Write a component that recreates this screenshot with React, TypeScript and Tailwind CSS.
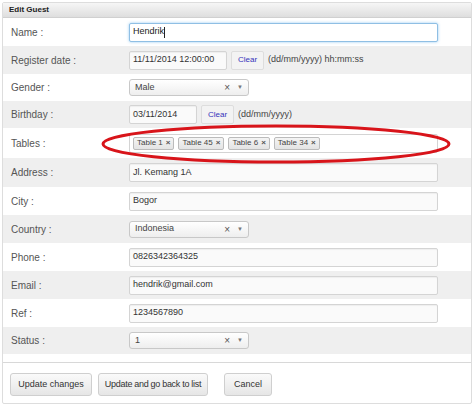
import React from 'react';

const fuente = { fontFamily: '"Liberation Sans", Arial, sans-serif' };

function Fila({ label, gris, alto = 'h-[28px]', children }: { label: string; gris?: boolean; alto?: string; children: React.ReactNode }) {
  return (
    <div className={`flex items-center ${alto} ${gris ? 'bg-[#efefef]' : 'bg-white'}`}>
      <div className="w-[126px] shrink-0 pl-[8px] text-[10px] text-[#555]">{label}</div>
      <div className="flex items-center gap-[4px] min-w-0">{children}</div>
    </div>
  );
}

function Input({ value, w = 'w-[309px]' }: { value: string; w?: string }) {
  return (
    <div className={`${w} h-[19px] border border-[#d4d4d4] bg-[#fafafa] rounded-[2px] px-[3px] flex items-center text-[9px] text-[#333] shadow-[inset_0_1px_1px_rgba(0,0,0,0.05)]`}>
      {value}
    </div>
  );
}

function Select({ value }: { value: string }) {
  return (
    <div className="w-[120px] h-[17px] border border-[#c8c8c8] rounded-[3px] bg-gradient-to-b from-white to-[#eee] flex items-center px-[5px] text-[9px] text-[#444]">
      <span className="flex-1">{value}</span>
      <span className="text-[10px] text-[#555] mr-[7px]">×</span>
      <span className="text-[6px] text-[#777]">▼</span>
    </div>
  );
}

function Clear() {
  return (
    <div className="h-[19px] w-[33px] justify-center border border-[#ddd] rounded-[2px] bg-[#f3f3f3] flex items-center text-[8px] text-[#3333bb]">
      Clear
    </div>
  );
}

function Tag({ t }: { t: string }) {
  return (
    <span className="h-[13px] px-[3px] border border-[#bbb] rounded-[2px] bg-gradient-to-b from-[#f4f4f4] to-[#e4e4e4] flex items-center gap-[3px] text-[8px] text-[#444]">
      {t}
      <span className="text-[8px] text-[#555] font-bold">×</span>
    </span>
  );
}

function Boton({ t, w, extra = '' }: { t: string; w: string; extra?: string }) {
  return (
    <div className={`${w} ${extra} h-[23px] justify-center whitespace-nowrap border border-[#cfcfcf] rounded-[3px] bg-gradient-to-b from-[#fafafa] to-[#e6e6e6] flex items-center text-[9px] text-[#333]`}>
      {t}
    </div>
  );
}

export default function App() {
  return (
    <div style={fuente} className="w-[474px] h-[413px] bg-white pt-[2px] px-[2px]">
      <div className="relative border border-[#ddd] rounded-[2px] h-[402px] flex flex-col">
        <div className="h-[15px] bg-gradient-to-b from-[#f6f6f6] to-[#dedede] border-b border-[#d0d0d0] flex items-center pl-[6px] text-[8px] font-bold text-[#222]">
          Edit Guest
        </div>
        <Fila label="Name :">
          <div className="w-[309px] h-[19px] border border-[#8fbfe4] bg-white rounded-[2px] px-[3px] flex items-center text-[9px] text-[#222] shadow-[0_0_3px_rgba(82,168,236,0.6)]">
            Hendrik<span className="w-px h-[11px] bg-[#222]" />
          </div>
        </Fila>
        <Fila label="Register date :" gris>
          <Input value="11/11/2014 12:00:00" w="w-[98px]" />
          <Clear />
          <span className="text-[9px] text-[#444]">(dd/mm/yyyy) hh:mm:ss</span>
        </Fila>
        <Fila label="Gender :" alto="h-[27px]">
          <Select value="Male" />
        </Fila>
        <Fila label="Birthday :" gris alto="h-[27px]">
          <Input value="03/11/2014" w="w-[68px]" />
          <Clear />
          <span className="text-[9px] text-[#444]">(dd/mm/yyyy)</span>
        </Fila>
        <Fila label="Tables :" alto="h-[30px]">
          <div className="w-[309px] h-[19px] border border-[#d4d4d4] bg-white rounded-[2px] px-[3px] flex items-center gap-[4px]">
            <Tag t="Table 1" />
            <Tag t="Table 45" />
            <Tag t="Table 6" />
            <Tag t="Table 34" />
          </div>
        </Fila>
        <Fila label="Address :" gris alto="h-[29px]">
          <Input value="Jl. Kemang 1A" />
        </Fila>
        <Fila label="City :">
          <Input value="Bogor" />
        </Fila>
        <Fila label="Country :" gris>
          <Select value="Indonesia" />
        </Fila>
        <Fila label="Phone :">
          <Input value="0826342364325" />
        </Fila>
        <Fila label="Email :" gris>
          <Input value="hendrik@gmail.com" />
        </Fila>
        <Fila label="Ref :">
          <Input value="1234567890" />
        </Fila>
        <Fila label="Status :" gris alto="h-[27px]">
          <Select value="1" />
        </Fila>
        <div className="h-[9px] border-b border-[#d8d8d8]" />
        <div className="flex items-center gap-[6px] pl-[7px] pt-[10px]">
          <Boton t="Update changes" w="w-[82px]" />
          <Boton t="Update and go back to list" w="w-[110px]" extra="tracking-[-0.3px]" />
          <div className="w-[4px]" />
          <Boton t="Cancel" w="w-[48px]" />
        </div>
        <svg className="absolute left-[97px] top-[120px] pointer-events-none" width="352" height="42" viewBox="0 0 352 42">
          <ellipse cx="176" cy="21" rx="173" ry="18" fill="none" stroke="#d8141a" strokeWidth="3" />
        </svg>
      </div>
    </div>
  );
}
